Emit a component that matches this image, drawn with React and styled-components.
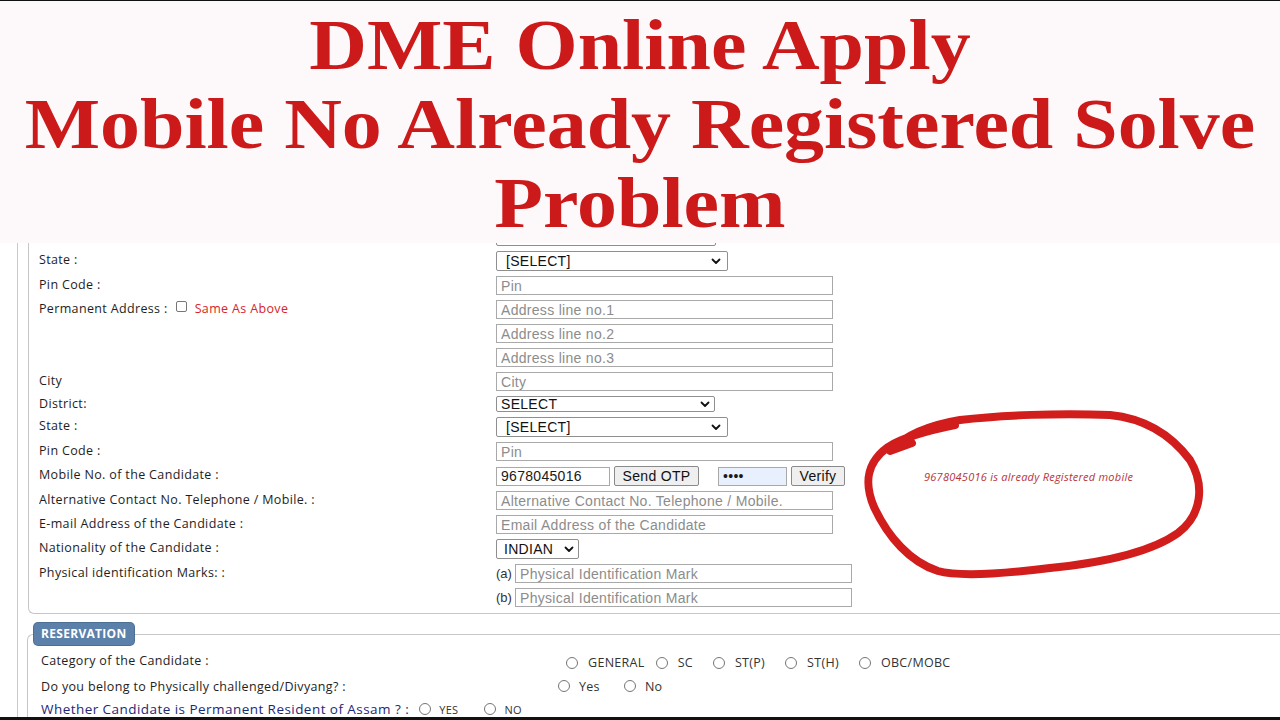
import React from "react";
import styled, { createGlobalStyle } from "styled-components";

const GlobalStyle = createGlobalStyle`
  html, body {
    margin: 0;
    padding: 0;
    background: #000;
  }
  body {
    width: 1280px;
    height: 720px;
    overflow: hidden;
  }
  * {
    box-sizing: border-box;
  }
`;

const Frame = styled.div`
  width: 1280px;
  height: 720px;
  display: flex;
  flex-direction: column;
  border-top: 1px solid #111;
  border-bottom: 3px solid #111;
  background: #fff;
  overflow: hidden;
`;

const Banner = styled.header`
  height: 242px;
  flex-shrink: 0;
  background: #fdf9fa;
  display: flex;
  justify-content: center;
  padding-top: 5px;
  position: relative;
  z-index: 2;
`;

// the thumbnail title is stretched sideways, so scale the glyphs to match
const Title = styled.h1`
  margin: 0;
  font-family: "Liberation Serif", "Times New Roman", serif;
  font-weight: 700;
  font-size: 71px;
  line-height: 79px;
  color: #cc1a1a;
  text-align: center;
  white-space: nowrap;
  transform: scaleX(1.125);
`;

const Viewport = styled.main`
  flex: 1;
  position: relative;
  overflow: hidden;
  background: #fff;
`;

const Page = styled.div`
  margin: -17px 0 0 17px;
  border-left: 1px solid #c3cbd5;
  padding-left: 10px;
  min-height: 600px;
`;

const AddressSet = styled.section`
  display: flex;
  flex-direction: column;
  gap: 5px;
  border-left: 1px solid #c6c6c6;
  border-bottom: 1px solid #c6c6c6;
  border-bottom-left-radius: 6px;
  padding: 0 0 6px 10px;
`;

const Row = styled.div`
  display: grid;
  grid-template-columns: 457px 1fr;
  align-items: start;
`;

const Label = styled.div`
  display: flex;
  align-items: center;
  gap: 8px;
  padding-top: 1px;
  font-family: "Open Sans", "Noto Sans", sans-serif;
  font-size: 12.5px;
  letter-spacing: 0.35px;
  line-height: 15px;
  color: #1e1e1e;
  white-space: nowrap;
  height: ${(p) => (p.$clip ? "13px" : "auto")};
  overflow: hidden;
`;

const Check = styled.span`
  width: 11px;
  height: 11px;
  border: 1px solid #767676;
  border-radius: 2px;
  background: #fff;
  margin-top: -5px;
`;

const SameAs = styled.span`
  color: #d8232a;
`;

const Controls = styled.div`
  display: flex;
  align-items: center;
  gap: 4px;
`;

const TextInput = styled.input`
  width: ${(p) => p.$w || 337}px;
  height: 19px;
  margin: 0;
  border: 1px solid #a9a9a9;
  padding: 0 4px;
  font-family: "Liberation Sans", Arial, sans-serif;
  font-size: 14px;
  letter-spacing: 0.3px;
  color: #1a1a1a;
  background: ${(p) => (p.$filled ? "#e8f0fe" : "#fff")};
  outline: none;
  &::placeholder {
    color: #8c8c8c;
  }
`;

const SelectBox = styled.div`
  width: ${(p) => p.$w}px;
  height: ${(p) => p.$h || 20}px;
  border: 1px solid #8f8f8f;
  border-radius: 2px;
  display: flex;
  align-items: center;
  justify-content: space-between;
  gap: 4px;
  padding: 0 ${(p) => p.$end || 6}px 0 ${(p) => p.$pad || 9}px;
  font-family: "Liberation Sans", Arial, sans-serif;
  font-size: 14px;
  letter-spacing: 0.3px;
  color: #111;
  background: #fff;
`;

const Button = styled.button`
  height: 20px;
  width: ${(p) => p.$w}px;
  margin: 0 ${(p) => p.$after || 0}px 0 0;
  padding: 0;
  border: 1px solid #8a8a8a;
  border-radius: 2px;
  background: #efefef;
  font-family: "Liberation Sans", Arial, sans-serif;
  font-size: 14px;
  letter-spacing: 0.3px;
  color: #111;
`;

const ErrorNote = styled.span`
  margin-left: 75px;
  font-family: "Open Sans", "Noto Sans", sans-serif;
  font-style: italic;
  font-size: 11px;
  letter-spacing: 0.25px;
  color: #b8343c;
  white-space: nowrap;
`;

const Marker = styled.span`
  width: 17px;
  font-family: "Liberation Sans", Arial, sans-serif;
  font-size: 13px;
  color: #333;
  margin-right: -2px;
`;

const ReservationSet = styled.fieldset`
  margin: 9px 0 0 -1px;
  padding: 0 0 0 13px;
  border: 1px solid #c6c6c6;
  border-right: none;
  border-bottom: none;
  border-top-left-radius: 6px;
  min-inline-size: auto;
  display: flex;
  flex-direction: column;
`;

const Legend = styled.legend`
  margin-left: -7px;
  padding: 0 7px;
  height: 22px;
  line-height: 22px;
  background: #5b80aa;
  color: #fff;
  border-radius: 4px;
  font-family: "Open Sans", "Noto Sans", sans-serif;
  font-weight: 700;
  font-size: 12px;
  letter-spacing: 0.3px;
  box-shadow: 0 0 0 1px #4d6f96;
`;

const ResRow = styled.div`
  display: flex;
  align-items: center;
  height: ${(p) => p.$h || 24}px;
  margin-top: ${(p) => p.$top || 0}px;
`;

const ResLabel = styled.span`
  width: ${(p) => (p.$inline ? "auto" : "517px")};
  font-family: "Open Sans", "Noto Sans", sans-serif;
  font-size: ${(p) => (p.$navy ? 13.5 : 12.5)}px;
  letter-spacing: ${(p) => (p.$navy ? 0.45 : 0.35)}px;
  color: ${(p) => (p.$navy ? "#1c2878" : "#1e1e1e")};
  white-space: nowrap;
`;

const RadioGroup = styled.div`
  display: flex;
  align-items: center;
  padding-left: ${(p) => p.$indent || 0}px;
  padding-top: ${(p) => p.$drop || 0}px;
`;

const Option = styled.span`
  display: inline-flex;
  align-items: center;
  gap: ${(p) => p.$gap || 10}px;
  margin-right: ${(p) => p.$after || 0}px;
  font-family: "Open Sans", "Noto Sans", sans-serif;
  font-size: ${(p) => p.$size || 12.5}px;
  letter-spacing: 0.3px;
  color: #333;
  white-space: nowrap;
`;

const Dot = styled.span`
  width: 12px;
  height: 12px;
  border: 1px solid #767676;
  border-radius: 50%;
  background: #fff;
`;

const Scribble = styled.svg`
  position: absolute;
  left: 860px;
  top: 162px;
  pointer-events: none;
`;

function Chevron() {
  return (
    <svg width="10" height="7" viewBox="0 0 10 7">
      <polyline points="1.5,1.5 5,5 8.5,1.5" fill="none" stroke="#111" strokeWidth="1.8" strokeLinecap="round" strokeLinejoin="round" />
    </svg>
  );
}

function Select({ w, h, pad, end, children }) {
  return (
    <SelectBox $w={w} $h={h} $pad={pad} $end={end}>
      <span>{children}</span>
      <Chevron />
    </SelectBox>
  );
}

function Radio({ children, after, gap, size }) {
  return (
    <Option $after={after} $gap={gap} $size={size}>
      <Dot />
      {children}
    </Option>
  );
}

function Field({ label, children }) {
  return (
    <Row>
      <Label>{label}</Label>
      <Controls>{children}</Controls>
    </Row>
  );
}

export default function App() {
  return (
    <>
      <GlobalStyle />
      <Frame>
        <Banner>
          <Title>
            DME Online Apply
            <br />
            Mobile No Already Registered Solve
            <br />
            Problem
          </Title>
        </Banner>
        <Viewport>
          <Page>
            <AddressSet>
              <Field label="District:">
                <Select w={220}>SELECT</Select>
              </Field>
              <Field label="State :">
                <Select w={232}>[SELECT]</Select>
              </Field>
              <Field label="Pin Code :">
                <TextInput readOnly placeholder="Pin" />
              </Field>
              <Row>
                <Label>
                  Permanent Address :
                  <Check />
                  <SameAs>Same As Above</SameAs>
                </Label>
                <Controls>
                  <TextInput readOnly placeholder="Address line no.1" />
                </Controls>
              </Row>
              <Field label="">
                <TextInput readOnly placeholder="Address line no.2" />
              </Field>
              <Field label="">
                <TextInput readOnly placeholder="Address line no.3" />
              </Field>
              <Field label="City">
                <TextInput readOnly placeholder="City" />
              </Field>
              <Row>
                <Label $clip>District:</Label>
                <Controls>
                  <Select w={219} h={16} pad={4} end={4}>SELECT</Select>
                </Controls>
              </Row>
              <Field label="State :">
                <Select w={232}>[SELECT]</Select>
              </Field>
              <Field label="Pin Code :">
                <TextInput readOnly placeholder="Pin" />
              </Field>
              <Field label="Mobile No. of the Candidate :">
                <TextInput readOnly $w={114} value="9678045016" />
                <Button $w={85} $after={15}>Send OTP</Button>
                <TextInput readOnly type="password" $w={69} $filled value="1234" />
                <Button $w={54}>Verify</Button>
                <ErrorNote>9678045016 is already Registered mobile</ErrorNote>
              </Field>
              <Field label="Alternative Contact No. Telephone / Mobile. :">
                <TextInput readOnly placeholder="Alternative Contact No. Telephone / Mobile." />
              </Field>
              <Field label="E-mail Address of the Candidate :">
                <TextInput readOnly placeholder="Email Address of the Candidate" />
              </Field>
              <Field label="Nationality of the Candidate :">
                <Select w={83} pad={7} end={4}>INDIAN</Select>
              </Field>
              <Field label="Physical identification Marks: :">
                <Marker>(a)</Marker>
                <TextInput readOnly placeholder="Physical Identification Mark" />
              </Field>
              <Field label="">
                <Marker>(b)</Marker>
                <TextInput readOnly placeholder="Physical Identification Mark" />
              </Field>
            </AddressSet>

            <ReservationSet>
              <Legend>RESERVATION</Legend>
              <ResRow $top={3}>
                <ResLabel>Category of the Candidate :</ResLabel>
                <RadioGroup $indent={8} $drop={5}>
                  <Radio after={11}>GENERAL</Radio>
                  <Radio after={20}>SC</Radio>
                  <Radio after={20}>ST(P)</Radio>
                  <Radio after={20}>ST(H)</Radio>
                  <Radio>OBC/MOBC</Radio>
                </RadioGroup>
              </ResRow>
              <ResRow $top={2}>
                <ResLabel>Do you belong to Physically challenged/Divyang? :</ResLabel>
                <RadioGroup>
                  <Radio gap={9} after={24}>Yes</Radio>
                  <Radio gap={9}>No</Radio>
                </RadioGroup>
              </ResRow>
              <ResRow $h={22}>
                <ResLabel $inline $navy>Whether Candidate is Permanent Resident of Assam ? :</ResLabel>
                <RadioGroup $indent={10}>
                  <Radio gap={8} after={26} size={11}>YES</Radio>
                  <Radio gap={8} size={11}>NO</Radio>
                </RadioGroup>
              </ResRow>
            </ReservationSet>
          </Page>

          <Scribble width="350" height="180" viewBox="0 0 350 180">
            <path
              d="M 52 38 L 30 46 C 45 30, 70 20, 100 15 C 140 10, 200 8, 250 10 C 290 14, 315 35, 330 55 C 345 80, 342 110, 318 128 C 290 148, 240 158, 190 163 C 150 168, 100 172, 78 166 C 50 157, 28 132, 14 102 C 4 78, 6 58, 28 42 C 45 31, 70 25, 95 20"
              fill="none"
              stroke="#d21d1d"
              strokeWidth="8"
              strokeLinecap="round"
              strokeLinejoin="round"
            />
          </Scribble>
        </Viewport>
      </Frame>
    </>
  );
}
